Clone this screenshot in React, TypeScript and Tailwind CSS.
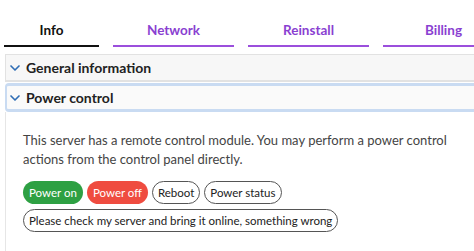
import { ChevronDown } from "lucide-react";

const tabs = [
  { name: "Info", active: true },
  { name: "Network", active: false },
  { name: "Reinstall", active: false },
  { name: "Billing", active: false },
];

function Header({ title, open }: { title: string; open?: boolean }) {
  return (
    <div
      className={
        open
          ? "flex items-center gap-[3px] h-[29px] pl-0 bg-[#fafafa] border-y-[3px] border-l-[2px] border-[#c9dbf2] rounded-l-[4px]"
          : "flex items-center gap-[3px] h-[28px] pl-px bg-[#f7f7f7] border-t border-b-[2px] border-[#e2e2e2] border-l"
      }
    >
      <ChevronDown size={16} strokeWidth={2.5} className="text-[#2f6db5]" />
      <span className="text-[14px] font-bold text-[#222]">{title}</span>
    </div>
  );
}

export default function App() {
  return (
    <div
      className="w-[474px] h-[251px] bg-white overflow-hidden"
      style={{ fontFamily: 'Lato, "Open Sans", sans-serif' }}
    >
      <div className="flex gap-[14px] pl-[4px] pt-[21px]">
        {tabs.map((t) => (
          <div
            key={t.name}
            className={
              t.active
                ? "w-[95px] shrink-0 text-center text-[13.5px] leading-[18px] font-bold text-[#111] pb-[6px] border-b-2 border-[#111]"
                : "w-[121px] shrink-0 text-center text-[13.5px] leading-[18px] font-bold text-[#8a3fd1] pb-[6px] border-b-2 border-[#9b4fdc]"
            }
          >
            {t.name}
          </div>
        ))}
      </div>
      <div className="mt-[7px] ml-[5px]">
        <Header title="General information" />
        <div className="mt-[1px]">
          <Header title="Power control" open />
        </div>
        <div className="border-l border-[#e6e6e6] pl-[17px] pt-[19px] h-[200px]">
          <p className="text-[13px] leading-[19px] text-[#444]">
            This server has a remote control module. You may perform a power control actions from the control panel directly.
          </p>
          <div className="flex flex-wrap gap-x-[4px] gap-y-[5px] mt-[12px] text-[11.5px] text-[#222]">
            <button className="h-[23px] px-[6px] rounded-full bg-[#2ea043] text-white">Power on</button>
            <button className="h-[23px] px-[6px] rounded-full bg-[#ef4c40] text-white">Power off</button>
            <button className="h-[23px] px-[5px] rounded-full border border-[#555] bg-white">Reboot</button>
            <button className="h-[23px] px-[5px] rounded-full border border-[#555] bg-white">Power status</button>
            <button className="h-[23px] px-[5px] rounded-full border border-[#555] bg-white">
              Please check my server and bring it online, something wrong
            </button>
          </div>
        </div>
      </div>
    </div>
  );
}
